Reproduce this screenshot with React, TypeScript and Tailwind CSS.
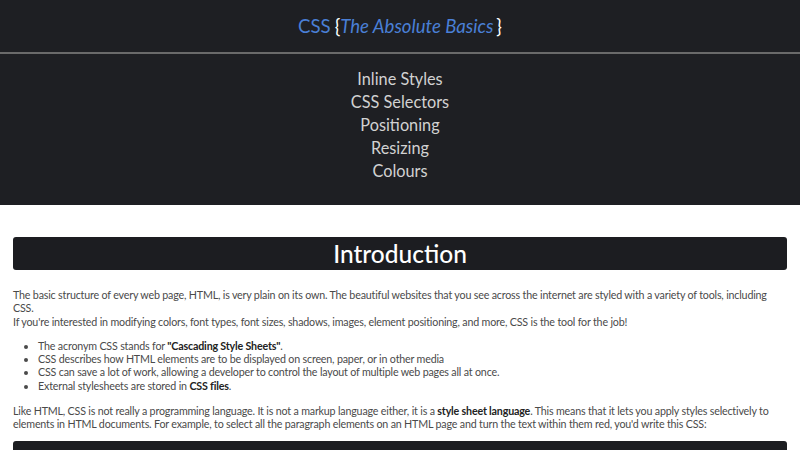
import React from "react";

export default function App() {
  const font = { fontFamily: 'Lato, "Noto Sans", sans-serif' };
  return (
    <div className="w-[800px] h-[450px] overflow-hidden bg-white" style={font}>
      <header className="h-[52px] bg-[#1e1f23] flex items-center justify-center text-[18.6px] leading-none">
        <span className="text-[#4a7fd6]">CSS</span>
        <span className="text-white ml-[4px]">{"{"}</span>
        <span className="text-[#4a7fd6] italic">The Absolute Basics</span>
        <span className="text-white ml-[3px]">{"}"}</span>
      </header>
      <div className="h-[2px] bg-[#6a6a6a]"></div>
      <nav className="bg-[#1e1f23] h-[151px] pt-[13px]">
        <ul className="flex flex-col items-center text-[16.3px] leading-[23px] text-[#d2d2d2]">
          <li>Inline Styles</li>
          <li>CSS Selectors</li>
          <li>Positioning</li>
          <li>Resizing</li>
          <li>Colours</li>
        </ul>
      </nav>
      <main className="px-[13px] pt-[32px] text-[#4a4a4a]">
        <h2 className="h-[33px] bg-[#1c1d21] rounded-[3px] text-white text-[24.5px] leading-[33px] text-center font-medium">
          Introduction
        </h2>
        <div className="text-[10.7px] leading-[13.3px] tracking-[-0.18px] mt-[18px]">
          <p>
            The basic structure of every web page, HTML, is very plain on its own. The beautiful websites that you see across the internet are styled with a variety of tools, including CSS.
            <br />
            If you're interested in modifying colors, font types, font sizes, shadows, images, element positioning, and more, CSS is the tool for the job!
          </p>
          <ul className="list-disc pl-[25px] mt-[11px]">
            <li>
              The acronym CSS stands for <b className="text-[#222]">"Cascading Style Sheets"</b>.
            </li>
            <li>CSS describes how HTML elements are to be displayed on screen, paper, or in other media</li>
            <li>CSS can save a lot of work, allowing a developer to control the layout of multiple web pages all at once.</li>
            <li>
              External stylesheets are stored in <b className="text-[#222]">CSS files</b>.
            </li>
          </ul>
          <p className="mt-[11.5px]">
            Like HTML, CSS is not really a programming language. It is not a markup language either, it is a{" "}
            <b className="text-[#222]">style sheet language</b>. This means that it lets you apply styles selectively to elements in HTML documents. For example, to select all the paragraph elements on an HTML page and turn the text within them red, you'd write this CSS:
          </p>
        </div>
        <div className="mt-[11px] h-[60px] bg-[#1c1d21] rounded-[3px]"></div>
      </main>
    </div>
  );
}
